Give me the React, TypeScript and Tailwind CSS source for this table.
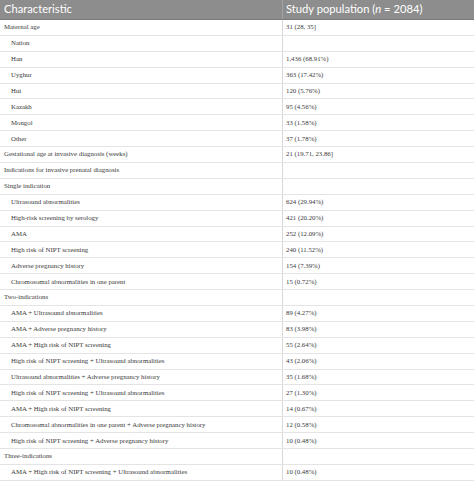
// @ts-nocheck
const ROWS: { label: string; value: string; indent?: boolean }[] = [
  { label: "Maternal age", value: "31 (28, 35]" },
  { label: "Nation", value: "", indent: true },
  { label: "Han", value: "1,436 (68.91%)", indent: true },
  { label: "Uyghur", value: "363 (17.42%)", indent: true },
  { label: "Hui", value: "120 (5.76%)", indent: true },
  { label: "Kazakh", value: "95 (4.56%)", indent: true },
  { label: "Mongol", value: "33 (1.58%)", indent: true },
  { label: "Other", value: "37 (1.78%)", indent: true },
  { label: "Gestational age at invasive diagnosis (weeks)", value: "21 (19.71, 23.86]" },
  { label: "Indications for invasive prenatal diagnosis", value: "" },
  { label: "Single indication", value: "" },
  { label: "Ultrasound abnormalities", value: "624 (29.94%)", indent: true },
  { label: "High-risk screening by serology", value: "421 (20.20%)", indent: true },
  { label: "AMA", value: "252 (12.09%)", indent: true },
  { label: "High risk of NIPT screening", value: "240 (11.52%)", indent: true },
  { label: "Adverse pregnancy history", value: "154 (7.39%)", indent: true },
  { label: "Chromosomal abnormalities in one parent", value: "15 (0.72%)", indent: true },
  { label: "Two-indications", value: "" },
  { label: "AMA + Ultrasound abnormalities", value: "89 (4.27%)", indent: true },
  { label: "AMA + Adverse pregnancy history", value: "83 (3.98%)", indent: true },
  { label: "AMA + High risk of NIPT screening", value: "55 (2.64%)", indent: true },
  { label: "High risk of NIPT screening + Ultrasound abnormalities", value: "43 (2.06%)", indent: true },
  { label: "Ultrasound abnormalities + Adverse pregnancy history", value: "35 (1.68%)", indent: true },
  { label: "High risk of NIPT screening + Ultrasound abnormalities", value: "27 (1.30%)", indent: true },
  { label: "AMA + High risk of NIPT screening", value: "14 (0.67%)", indent: true },
  { label: "Chromosomal abnormalities in one parent + Adverse pregnancy history", value: "12 (0.58%)", indent: true },
  { label: "High risk of NIPT screening + Adverse pregnancy history", value: "10 (0.48%)", indent: true },
  { label: "Three-indications", value: "" },
  { label: "AMA + High risk of NIPT screening + Ultrasound abnormalities", value: "10 (0.48%)", indent: true },
];

export default function App() {
  return (
    <div className="w-[474px] h-[481px] overflow-hidden bg-white">
      {/* header */}
      <div className="flex h-[20px] bg-[#8d8d8d] text-white text-[11.2px] font-['Lato',sans-serif] border-b border-[#7a7a7a]">
        <div className="w-[283px] pl-[4px] flex items-center border-r border-[#a3a3a3]">Characteristic</div>
        <div className="flex-1 pl-[3px] flex items-center">
          Study population (<span className="italic">n</span>&nbsp;= 2084)
        </div>
      </div>

      {/* body */}
      {ROWS.map((row, i) => (
        <div
          key={i}
          className="flex h-[15.9px] border-b-[1.5px] border-[#e4e4e4] text-[6.8px] text-[#3a3a3a] font-['Liberation_Serif',serif]"
        >
          <div className={`w-[283px] flex items-center border-r border-[#d9d9d9] ${row.indent ? "pl-[11px]" : "pl-[4px]"}`}>
            {row.label}
          </div>
          <div className="flex-1 pl-[3px] flex items-center">{row.value}</div>
        </div>
      ))}
    </div>
  );
}
